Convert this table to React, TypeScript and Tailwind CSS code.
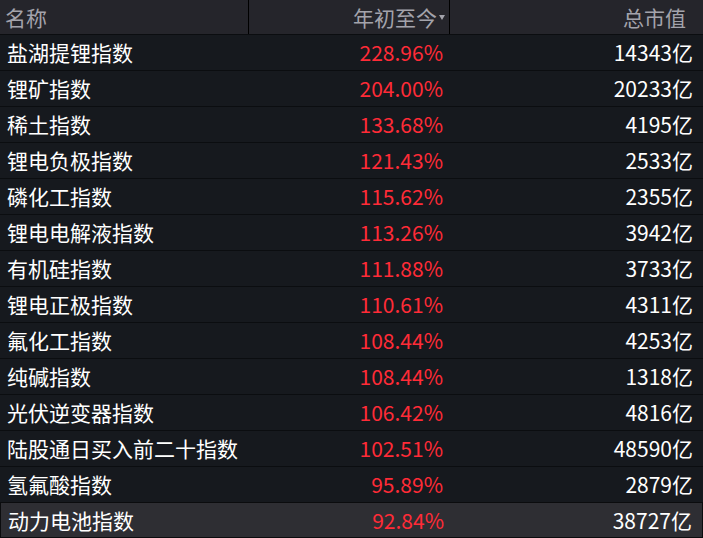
const rows = [
  { name: "盐湖提锂指数", pct: "228.96%", cap: "14343亿" },
  { name: "锂矿指数", pct: "204.00%", cap: "20233亿" },
  { name: "稀土指数", pct: "133.68%", cap: "4195亿" },
  { name: "锂电负极指数", pct: "121.43%", cap: "2533亿" },
  { name: "磷化工指数", pct: "115.62%", cap: "2355亿" },
  { name: "锂电电解液指数", pct: "113.26%", cap: "3942亿" },
  { name: "有机硅指数", pct: "111.88%", cap: "3733亿" },
  { name: "锂电正极指数", pct: "110.61%", cap: "4311亿" },
  { name: "氟化工指数", pct: "108.44%", cap: "4253亿" },
  { name: "纯碱指数", pct: "108.44%", cap: "1318亿" },
  { name: "光伏逆变器指数", pct: "106.42%", cap: "4816亿" },
  { name: "陆股通日买入前二十指数", pct: "102.51%", cap: "48590亿" },
  { name: "氢氟酸指数", pct: "95.89%", cap: "2879亿" },
  { name: "动力电池指数", pct: "92.84%", cap: "38727亿" },
];

export default function App() {
  return (
    <div
      className="w-[703px] h-[538px] overflow-hidden bg-[#16191e]"
      style={{ fontFamily: '"Noto Sans CJK SC", "Noto Sans", sans-serif' }}
    >
      {/* 表头 */}
      <div className="grid grid-cols-[249px_201px_1fr] h-[34px] bg-[#25252b] text-[#a3a3ab] text-[21px] leading-none">
        <div className="flex items-center pl-[5px] border-r border-black">名称</div>
        <div className="flex items-center justify-end pr-[4px] border-r border-black">
          年初至今
          <span className="ml-[2px] w-0 h-0 border-l-[3px] border-r-[3px] border-t-[5px] border-l-transparent border-r-transparent border-t-[#a3a3ab]" />
        </div>
        <div className="flex items-center justify-end pr-[17px]">总市值</div>
      </div>

      {/* 列表 */}
      {rows.map((r, i) => {
        const last = i === rows.length - 1;
        return (
          <div
            key={i}
            className={
              last
                ? "grid grid-cols-[249px_201px_1fr] h-[36px] bg-[#2e2e33] border border-[#0b0c0e] text-[21px] leading-none"
                : "grid grid-cols-[249px_201px_1fr] h-[36px] border-t border-[#0b0d10] text-[21px] leading-none"
            }
          >
            <div className="flex items-center pl-[7px] text-white">{r.name}</div>
            <div className="flex items-center justify-end pr-[7px] text-[#ff2b37]">{r.pct}</div>
            <div className="flex items-center justify-end pr-[10px] text-white">{r.cap}</div>
          </div>
        );
      })}
    </div>
  );
}
